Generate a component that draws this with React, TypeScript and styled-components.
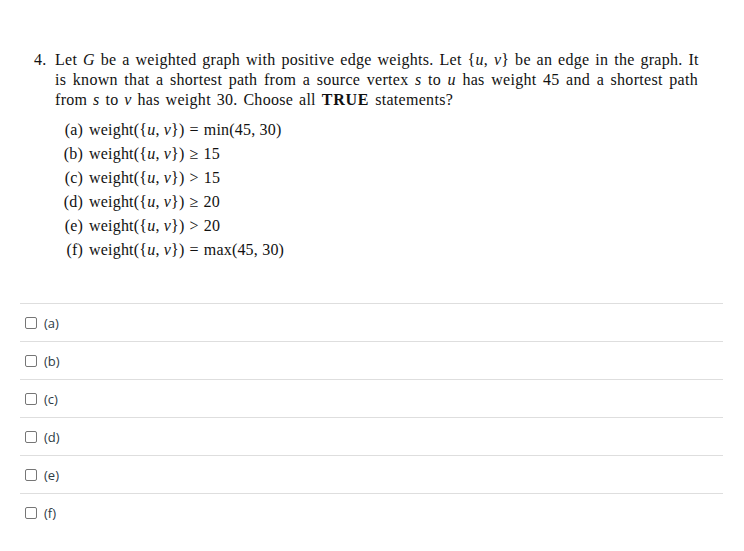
import React from "react";
import styled, { createGlobalStyle } from "styled-components";

const GlobalStyle = createGlobalStyle`
  html, body {
    margin: 0;
    padding: 0;
    background: #fff;
  }
`

// QUESTION

const Page = styled.div`
  width: 744px;
  height: 551px;
  box-sizing: border-box;
  padding: 50px 21px 0 20px;
  overflow: hidden;
`

const Question = styled.div`
  font-family: "Liberation Serif", "Times New Roman", serif;
  font-size: 16px;
  letter-spacing: 0.3px;
  word-spacing: 1.5px;
  color: #111;
`

const Stem = styled.div`
  display: flex;
  padding-left: 14px;
  padding-right: 25px;
  line-height: 20px;
`

const Number = styled.span`
  flex: 0 0 21px;
`

const StemText = styled.div`
  flex: 1;
  min-width: 0;
`

const StemLine = styled.div<{ last?: boolean }>`
  text-align: justify;
  text-align-last: ${p => p.last ? 'left' : 'justify'};
  white-space: nowrap;
`

const Bold = styled.b`
  font-weight: 700;
  letter-spacing: 0.8px;
`

const Var = styled.i`
  font-style: italic;
`

const Options = styled.ol`
  list-style: none;
  margin: 8px 0 0;
  padding: 0;
  letter-spacing: 0.2px;
  word-spacing: 0;
`

const Option = styled.li`
  display: flex;
  line-height: 24px;
`

const OptionTag = styled.span`
  flex: 0 0 63px;
  text-align: right;
  padding-right: 6px;
`

const Rel = styled.span`
  padding: 0 5px;
`

// ANSWERS

const Answers = styled.div`
  margin-top: 41px;
`

const AnswerRow = styled.label`
  display: flex;
  align-items: center;
  gap: 7px;
  height: 38px;
  box-sizing: border-box;
  padding-left: 5px;
  border-top: 1px solid #dedede;
  font-family: "Open Sans", "Liberation Sans", sans-serif;
  font-size: 13px;
  color: #2d3b45;
`

const Box = styled.input`
  appearance: none;
  margin: 0;
  width: 12px;
  height: 12px;
  border: 1px solid #767676;
  border-radius: 2px;
  background: #fff;
`

const Set = () => (
  <>
    ({"{"}<Var>u</Var>, <Var>v</Var>{"}"})
  </>
)

const options: { tag: string; rel: string; rhs: string }[] = [
  { tag: "a", rel: "=", rhs: "min(45, 30)" },
  { tag: "b", rel: "≥", rhs: "15" },
  { tag: "c", rel: ">", rhs: "15" },
  { tag: "d", rel: "≥", rhs: "20" },
  { tag: "e", rel: ">", rhs: "20" },
  { tag: "f", rel: "=", rhs: "max(45, 30)" },
]

export default function App() {
  return (
    <Page>
      <GlobalStyle />
      <Question>
        <Stem>
          <Number>4.</Number>
          <StemText>
            <StemLine>
              Let <Var>G</Var> be a weighted graph with positive edge weights. Let {"{"}<Var>u</Var>, <Var>v</Var>{"}"} be an edge in the graph. It
            </StemLine>
            <StemLine>
              is known that a shortest path from a source vertex <Var>s</Var> to <Var>u</Var> has weight 45 and a shortest path
            </StemLine>
            <StemLine last>
              from <Var>s</Var> to <Var>v</Var> has weight 30. Choose all <Bold>TRUE</Bold> statements?
            </StemLine>
          </StemText>
        </Stem>
        <Options>
          {options.map(o => (
            <Option key={o.tag}>
              <OptionTag>({o.tag})</OptionTag>
              <span>
                weight<Set /><Rel>{o.rel}</Rel>{o.rhs}
              </span>
            </Option>
          ))}
        </Options>
      </Question>
      <Answers>
        {options.map(o => (
          <AnswerRow key={o.tag}>
            <Box type="checkbox" />
            ({o.tag})
          </AnswerRow>
        ))}
      </Answers>
    </Page>
  )
}
